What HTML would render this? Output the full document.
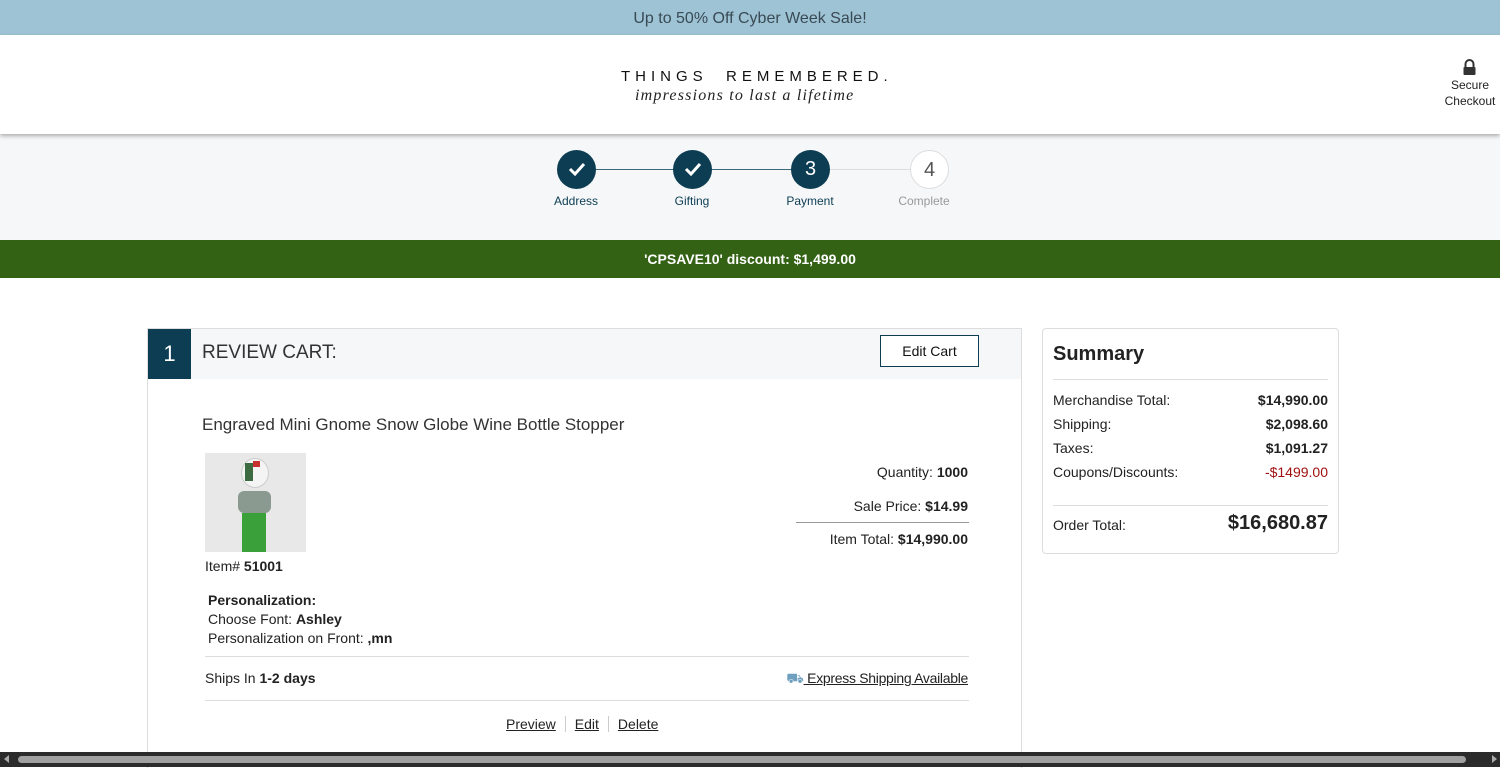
<!DOCTYPE html>
<html><head><style>
*{margin:0;padding:0;box-sizing:border-box}
body{width:1500px;height:767px;overflow:hidden;font-family:"Liberation Sans",sans-serif;color:#222;background:#fff;position:relative}
.abs{position:absolute}
.top{left:0;top:0;width:1500px;height:35px;background:#9dc3d4;text-align:center;font-size:16px;line-height:38px;color:#3a4a55}
.hdr{left:0;top:35px;width:1500px;height:99px;background:#fff;box-shadow:0 2px 4px rgba(0,0,0,.3);z-index:2}
.steps{left:0;top:134px;width:1500px;height:106px;background:#f5f7f9}
.c{width:39px;height:39px;border-radius:50%;background:#0d3d52;color:#fff;text-align:center;line-height:39px;font-size:20px}
.ck{font-size:17px}
.lbl{font-size:12px;color:#0d3d52;width:100px;text-align:center}
.green{left:0;top:240px;width:1500px;height:38px;background:#346215;color:#fff;text-align:center;font-weight:bold;font-size:14px;line-height:38px}
.box{left:147px;top:328px;width:875px;height:440px;border:1px solid #ddd;border-bottom:none}
.sum{left:1042px;top:328px;width:297px;height:226px;border:1px solid #ddd;border-radius:4px}
.row{position:absolute;left:10px;right:10px;font-size:14px}
.row b{position:absolute;right:0;top:0}
u{text-decoration:underline}
</style></head><body>
<div class="abs top">Up to 50% Off Cyber Week Sale!</div>
<div class="abs hdr">
 <div class="abs" style="left:621px;top:33px;font-size:15px;letter-spacing:5px;color:#111;white-space:nowrap">THINGS&nbsp; REMEMBERED.</div>
 <div class="abs" style="left:635px;top:52px;font-family:'Liberation Serif',serif;font-style:italic;font-size:16px;letter-spacing:1.2px;color:#222">impressions to last a lifetime</div>
 <svg class="abs" style="left:1462px;top:24px" width="15" height="17" viewBox="0 0 15 17"><path d="M3.5 8V5a4 4 0 0 1 8 0v3" fill="none" stroke="#333" stroke-width="2"/><rect x="1.5" y="8" width="12" height="8" rx="1" fill="#333"/></svg>
 <div class="abs" style="left:1440px;top:42px;width:60px;text-align:center;font-size:12px;line-height:16px">Secure<br>Checkout</div>
</div>
<div class="abs steps">
 <div class="abs" style="left:576px;top:35px;width:235px;height:1px;background:#3d6a78"></div>
 <div class="abs" style="left:811px;top:35px;width:120px;height:1px;background:#ddd"></div>
 <div class="abs c" style="left:557px;top:16px"><svg width="18" height="14" viewBox="0 0 18 14" style="margin-top:12px"><path d="M2 7l5 5 9-10" fill="none" stroke="#fff" stroke-width="3"/></svg></div>
 <div class="abs c" style="left:673px;top:16px"><svg width="18" height="14" viewBox="0 0 18 14" style="margin-top:12px"><path d="M2 7l5 5 9-10" fill="none" stroke="#fff" stroke-width="3"/></svg></div>
 <div class="abs c" style="left:791px;top:16px">3</div>
 <div class="abs c" style="left:910px;top:16px;background:#fff;border:1px solid #ddd;color:#555">4</div>
 <div class="abs lbl" style="left:526px;top:60px">Address</div>
 <div class="abs lbl" style="left:642px;top:60px">Gifting</div>
 <div class="abs lbl" style="left:760px;top:60px">Payment</div>
 <div class="abs lbl" style="left:874px;top:60px;color:#999">Complete</div>
</div>
<div class="abs green">'CPSAVE10' discount: $1,499.00</div>
<div class="abs box">
 <div class="abs" style="left:0;top:0;width:873px;height:50px;background:#f5f7f9"></div>
 <div class="abs" style="left:0;top:0;width:43px;height:50px;background:#0d3d52;color:#fff;font-size:22px;text-align:center;line-height:50px">1</div>
 <div class="abs" style="left:54px;top:13px;font-size:19px;color:#333">REVIEW CART:</div>
 <div class="abs" style="left:732px;top:6px;width:99px;height:32px;border:1px solid #0d3d52;background:#fff;text-align:center;line-height:30px;font-size:14px;color:#111">Edit Cart</div>
 <div class="abs" style="left:54px;top:86px;font-size:17px;color:#333">Engraved Mini Gnome Snow Globe Wine Bottle Stopper</div>
 <div class="abs" style="left:57px;top:124px;width:101px;height:99px;background:#e8e8e8">
  <div class="abs" style="left:37px;top:60px;width:24px;height:39px;background:#3aa03a"></div>
  <div class="abs" style="left:33px;top:38px;width:33px;height:22px;border-radius:6px;background:#8a9a90"></div>
  <div class="abs" style="left:36px;top:5px;width:28px;height:30px;border-radius:50%;background:#f4f4f4;border:1px solid #ccc"></div>
  <div class="abs" style="left:40px;top:10px;width:8px;height:18px;background:#3d6a40"></div>
  <div class="abs" style="left:48px;top:8px;width:7px;height:6px;background:#c83030"></div>
 </div>
 <div class="abs" style="left:57px;top:229px;font-size:14px">Item# <b>51001</b></div>
 <div class="abs" style="left:60px;top:262px;font-size:14px;line-height:19px"><b>Personalization:</b><br>Choose Font: <b>Ashley</b><br>Personalization on Front: <b>,mn</b></div>
 <div class="abs" style="right:53px;top:135px;font-size:14px;text-align:right">Quantity: <b>1000</b></div>
 <div class="abs" style="right:53px;top:169px;font-size:14px;text-align:right">Sale Price: <b>$14.99</b></div>
 <div class="abs" style="left:648px;top:193px;width:173px;height:1px;background:#999"></div>
 <div class="abs" style="right:53px;top:202px;font-size:14px;text-align:right">Item Total: <b>$14,990.00</b></div>
 <div class="abs" style="left:57px;top:327px;width:764px;height:1px;background:#ddd"></div>
 <div class="abs" style="left:57px;top:341px;font-size:14px">Ships In <b>1-2 days</b></div>
 <div class="abs" style="right:53px;top:341px;font-size:14px;letter-spacing:-0.3px"><span style="color:#6fa0c0">&#9951;</span><u> Express Shipping Available</u></div>
 <div class="abs" style="left:57px;top:371px;width:764px;height:1px;background:#ddd"></div>
 <div class="abs" style="left:358px;top:387px;font-size:14px;white-space:nowrap"><u>Preview</u><span style="display:inline-block;width:1px;height:16px;background:#ccc;margin:0 9px;vertical-align:-3px"></span><u>Edit</u><span style="display:inline-block;width:1px;height:16px;background:#ccc;margin:0 9px;vertical-align:-3px"></span><u>Delete</u></div>
</div>
<div class="abs sum">
 <div class="abs" style="left:10px;top:14px;font-size:20px;font-weight:bold">Summary</div>
 <div class="abs" style="left:10px;right:10px;top:50px;height:1px;background:#ddd"></div>
 <div class="row" style="top:63px">Merchandise Total:<b>$14,990.00</b></div>
 <div class="row" style="top:87px">Shipping:<b>$2,098.60</b></div>
 <div class="row" style="top:111px">Taxes:<b>$1,091.27</b></div>
 <div class="row" style="top:135px">Coupons/Discounts:<b style="color:#a01010;font-weight:normal">-$1499.00</b></div>
 <div class="abs" style="left:10px;right:10px;top:176px;height:1px;background:#ddd"></div>
 <div class="row" style="top:188px">Order Total:<b style="font-size:20px;top:-5px">$16,680.87</b></div>
</div>
<div class="abs" style="left:0;top:752px;width:1500px;height:15px;background:#2b2b2b">
 <div class="abs" style="left:18px;top:4px;width:1448px;height:7px;border-radius:4px;background:#a0a0a0"></div>
 <div class="abs" style="left:4px;top:3px;width:0;height:0;border:4px solid transparent;border-right:5px solid #aaa;border-left:none"></div>
 <div class="abs" style="left:1492px;top:3px;width:0;height:0;border:4px solid transparent;border-left:5px solid #aaa;border-right:none"></div>
</div>
</body></html>
